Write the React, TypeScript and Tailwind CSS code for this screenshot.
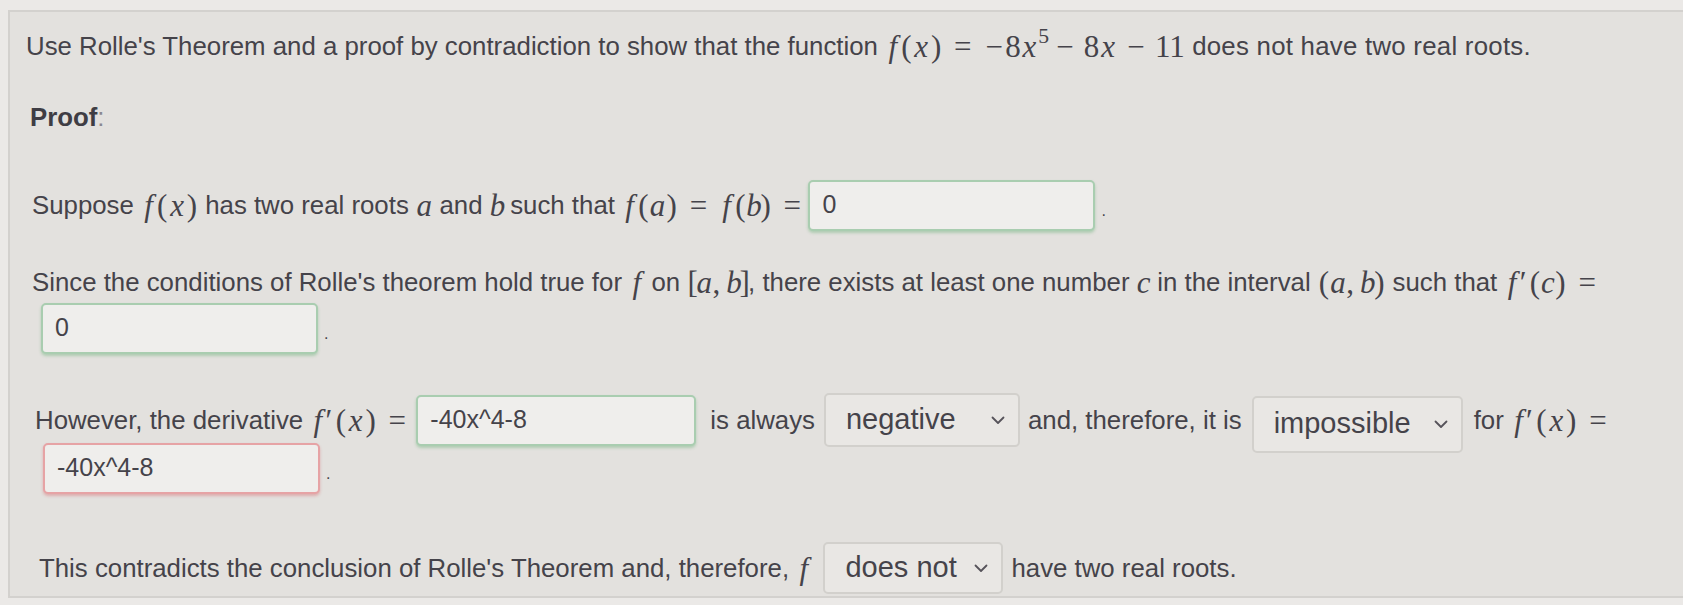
import React from "react";

const sans = "font-['Liberation_Sans',Arial,sans-serif]";

// math runs, sized and spaced like KaTeX (glyph boxes at Computer Modern widths)
function M({ children }: { children: React.ReactNode }) {
  return (
    <span className="font-['Liberation_Serif','Times_New_Roman',serif] text-[31px] leading-none whitespace-nowrap">
      {children}
    </span>
  );
}

const widths: Record<string, string> = {
  f: "w-[0.49em]",
  x: "w-[0.572em]",
  a: "w-[0.529em]",
  b: "w-[0.429em]",
  c: "w-[0.433em]",
};

function V({ c }: { c: string }) {
  return <span className={`inline-block italic text-center ${widths[c]}`}>{c}</span>;
}

function P({ c }: { c: string }) {
  return <span className="inline-block w-[0.389em] text-center">{c}</span>;
}

function Br({ c }: { c: string }) {
  return <span className="inline-block w-[0.278em] text-center">{c}</span>;
}

function Rel({ end }: { end?: boolean }) {
  return <span className={`inline-block w-[0.778em] text-center ml-[0.278em] ${end ? "" : "mr-[0.278em]"}`}>=</span>;
}

function Bin() {
  return <span className="inline-block w-[0.778em] text-center mx-[0.222em]">−</span>;
}

function Minus() {
  return <span className="inline-block w-[0.7em] text-center">−</span>;
}

function Prime() {
  return <span className="inline-block w-[0.3em] text-left">′</span>;
}

function Comma() {
  return <span className="inline-block w-[0.278em] mr-[0.167em]">,</span>;
}

function Box({ value, w, red, cls = "" }: { value: string; w: string; red?: boolean; cls?: string }) {
  return (
    <div
      className={`${w} h-[51px] flex items-center pl-[12px] rounded-[5px] bg-[#efeeec] border-2 text-[25px] ${
        red
          ? "border-[#e6a3a5] shadow-[0_2px_3px_rgba(214,110,115,0.45)]"
          : "border-[#a9cdb0] shadow-[0_2px_3px_rgba(110,180,125,0.45)]"
      } ${cls}`}
    >
      {value}
    </div>
  );
}

function Select({ value, w, h = "h-[54px]", cls = "" }: { value: string; w: string; h?: string; cls?: string }) {
  return (
    <div
      className={`${w} ${h} flex items-center justify-between pl-[20px] pr-[13px] rounded-[5px] bg-[#e9e7e4] border-2 border-[#d2d0cc] text-[29px] ${cls}`}
    >
      <span>{value}</span>
      <svg width="14" height="9" viewBox="0 0 14 9" fill="none">
        <path d="M1.5 1.5 L7 7 L12.5 1.5" stroke="#56535a" strokeWidth="1.8" strokeLinecap="round" strokeLinejoin="round" />
      </svg>
    </div>
  );
}

function Dot() {
  return <span className="ml-[6px] self-end mb-[8px] text-[16px]">.</span>;
}

export default function App() {
  return (
    <div className={`${sans} w-[1683px] h-[605px] overflow-hidden bg-[#ebe9e7] pt-[10px] pl-[8px] text-[#45434a]`}>
      <div className="h-[588px] bg-[#e3e1de] border-l-2 border-t-2 border-b-2 border-[#d3d1ce] pl-[16px] pt-[16px] text-[25.8px]">
        {/* statement */}
        <div className="h-[36px] flex items-center whitespace-nowrap">
          <span>Use Rolle's Theorem and a proof by contradiction to show that the function&nbsp;</span>
          <M>
            <V c="f" />
            <P c="(" />
            <V c="x" />
            <P c=")" />
            <Rel />
            <Minus />8<V c="x" />
            <span className="inline-block w-[0.35em] text-[0.7em] relative -top-[0.6em]">5</span>
            <Bin />8<V c="x" />
            <Bin />11
          </M>
          <span className="tracking-[0.01em]">&nbsp;does not have two real roots.</span>
        </div>

        <div className="h-[36px] mt-[35px] ml-[4px] flex items-center">
          <span className="font-bold text-[#3f3d44]">Proof</span>
          <span className="text-[#8a8890]">:</span>
        </div>

        {/* line 3 */}
        <div className="h-[52px] mt-[44px] ml-[6px] flex items-center whitespace-nowrap">
          <span>Suppose&nbsp;</span>
          <M>
            <V c="f" />
            <P c="(" />
            <V c="x" />
            <P c=")" />
          </M>
          <span>&nbsp;has two real roots&nbsp;</span>
          <M>
            <V c="a" />
          </M>
          <span>&nbsp;and&nbsp;</span>
          <M>
            <V c="b" />
          </M>
          <span>&nbsp;such that&nbsp;</span>
          <M>
            <V c="f" />
            <P c="(" />
            <V c="a" />
            <P c=")" />
            <Rel />
            <V c="f" />
            <P c="(" />
            <V c="b" />
            <P c=")" />
            <Rel end />
          </M>
          <Box value="0" w="w-[287px]" cls="ml-[4px]" />
          <Dot />
        </div>

        {/* line 4 */}
        <div className="h-[36px] mt-[33px] ml-[6px] flex items-center whitespace-nowrap">
          <span>Since the conditions of Rolle's theorem hold true for&nbsp;</span>
          <M>
            <V c="f" />
          </M>
          <span>&nbsp;on&nbsp;</span>
          <M>
            <Br c="[" />
            <V c="a" />
            <Comma />
            <V c="b" />
            <Br c="]" />
          </M>
          <span>, there exists at least one number&nbsp;</span>
          <M>
            <V c="c" />
          </M>
          <span>&nbsp;in the interval&nbsp;</span>
          <M>
            <P c="(" />
            <V c="a" />
            <Comma />
            <V c="b" />
            <P c=")" />
          </M>
          <span>&nbsp;such that&nbsp;</span>
          <M>
            <V c="f" />
            <Prime />
            <P c="(" />
            <V c="c" />
            <P c=")" />
            <Rel end />
          </M>
        </div>
        <div className="h-[52px] mt-[2px] ml-[15px] flex items-center">
          <Box value="0" w="w-[277px]" />
          <Dot />
        </div>

        {/* line 5 */}
        <div className="h-[54px] mt-[39px] ml-[9px] flex items-center whitespace-nowrap">
          <span>However, the derivative&nbsp;</span>
          <M>
            <V c="f" />
            <Prime />
            <P c="(" />
            <V c="x" />
            <P c=")" />
            <Rel end />
          </M>
          <Box value="-40x^4-8" w="w-[280px]" cls="ml-[7px]" />
          <span className="ml-[14px]">is always</span>
          <Select value="negative" w="w-[196px]" cls="ml-[9px]" />
          <span className="ml-[8px]">and, therefore, it is</span>
          <Select value="impossible" w="w-[211px]" h="h-[57px]" cls="ml-[10px] mt-[8px]" />
          <span className="ml-[11px]">for&nbsp;</span>
          <M>
            <V c="f" />
            <Prime />
            <P c="(" />
            <V c="x" />
            <P c=")" />
            <Rel end />
          </M>
        </div>
        <div className="h-[52px] -mt-[5px] ml-[17px] flex items-center">
          <Box value="-40x^4-8" w="w-[277px]" red />
          <Dot />
        </div>

        {/* line 6 */}
        <div className="h-[52px] mt-[48px] ml-[13px] flex items-center whitespace-nowrap">
          <span>This contradicts the conclusion of Rolle's Theorem and, therefore,&nbsp;</span>
          <M>
            <V c="f" />
          </M>
          <Select value="does not" w="w-[180px]" h="h-[52px]" cls="ml-[12px]" />
          <span className="ml-[8px]">have two real roots.</span>
        </div>
      </div>
    </div>
  );
}
